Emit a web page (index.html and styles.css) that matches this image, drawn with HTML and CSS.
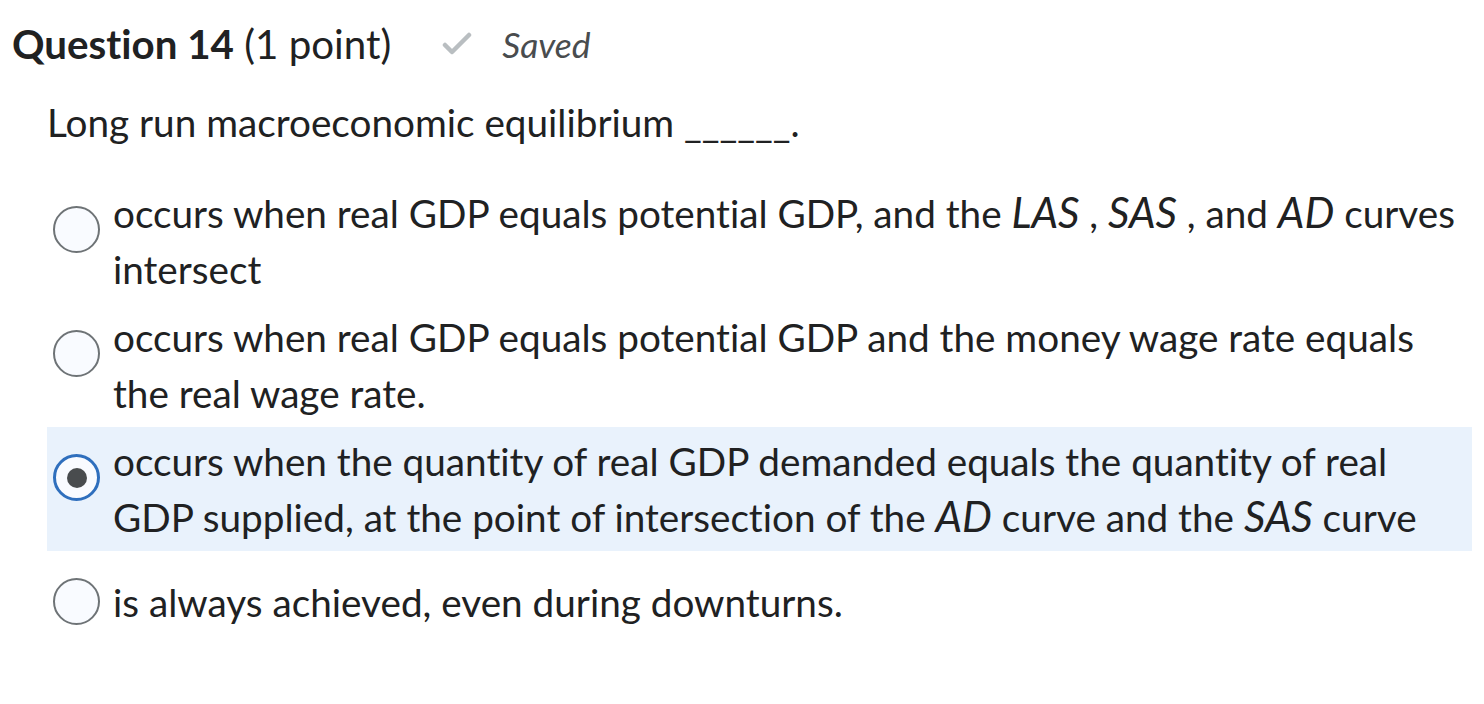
FILE: index.html
```html
<!DOCTYPE html>
<html lang="en">
<head>
<meta charset="utf-8">
<title>Question 14</title>
<link rel="stylesheet" href="styles.css">
</head>
<body>
<div class="question">
  <div class="q-header">
    <h2 class="q-title"><strong>Question 14</strong> (1 point)</h2>
    <span class="q-status">
      <svg class="check" viewBox="0 0 32 24" width="32" height="24" aria-hidden="true">
        <path d="M4 13 L11 20 L28 3" fill="none" stroke="#b9bec1" stroke-width="4.5" stroke-linecap="round" stroke-linejoin="round"/>
      </svg>
      <span class="saved">Saved</span>
    </span>
  </div>
  <p class="q-text">Long run macroeconomic equilibrium ______.</p>
  <div class="choices">
    <label class="choice">
      <span class="radio"></span>
      <span class="choice-text">occurs when real GDP equals potential GDP, and the <i>LAS</i> , <i>SAS</i> , and <i>AD</i> curves intersect</span>
    </label>
    <label class="choice">
      <span class="radio"></span>
      <span class="choice-text">occurs when real GDP equals potential GDP and the money wage rate equals the real wage rate.</span>
    </label>
    <label class="choice choice--selected">
      <span class="radio radio--checked"></span>
      <span class="choice-text">occurs when the quantity of real GDP demanded equals the quantity of real GDP supplied, at the point of intersection of the <i>AD</i> curve and the <i>SAS</i> curve</span>
    </label>
    <label class="choice choice--single">
      <span class="radio"></span>
      <span class="choice-text">is always achieved, even during downturns.</span>
    </label>
  </div>
</div>
</body>
</html>
```
FILE: styles.css
```css
* { box-sizing: border-box; }
html, body {
  margin: 0;
  padding: 0;
  background: #ffffff;
}
body {
  font-family: Lato, "Noto Sans", sans-serif;
  color: #202122;
  font-variant-ligatures: none;
}
.question {
  padding: 16px 12px 0 12px;
  width: 1484px;
}
.q-header {
  display: flex;
  align-items: center;
  height: 56px;
}
.q-title {
  margin: 0;
  font-size: 40.3px;
  font-weight: 400;
  line-height: 56px;
}
.q-title strong { font-weight: 700; }
.q-status {
  display: flex;
  align-items: center;
  margin-left: 50px;
}
.check { display: block; }
.saved {
  margin-left: 29px;
  font-style: italic;
  font-size: 35.5px;
  color: #494c4e;
}
.q-text {
  margin: 22px 0 0 35px;
  font-size: 38.7px;
  line-height: 56px;
}
.choices {
  margin: 29px 0 0 35px;
  width: 1425px;
  display: flex;
  flex-direction: column;
}
.choice {
  display: flex;
  align-items: flex-start;
  padding: 6px 6px;
  min-height: 124px;
}
.choice--selected { background: #e9f2fc; }
.choice--single {
  align-items: center;
  min-height: 0;
}
.radio {
  flex: none;
  width: 47px;
  height: 47px;
  margin: 21px 0;
  border-radius: 50%;
  border: 2px solid #6e7376;
  background: #f9fbff;
  position: relative;
}
.radio--checked {
  border: 3px solid #2f6fbd;
  background: #f9fbff;
}
.radio--checked::after {
  content: "";
  position: absolute;
  left: 50%;
  top: 50%;
  width: 20px;
  height: 20px;
  margin: -10px 0 0 -10px;
  border-radius: 50%;
  background: #494c4e;
}
.choice-text {
  margin-left: 13px;
  font-size: 38.7px;
  line-height: 56px;
}
.choice-text i {
  font-style: italic;
  font-size: 1.09em;
  line-height: 1;
}
```
